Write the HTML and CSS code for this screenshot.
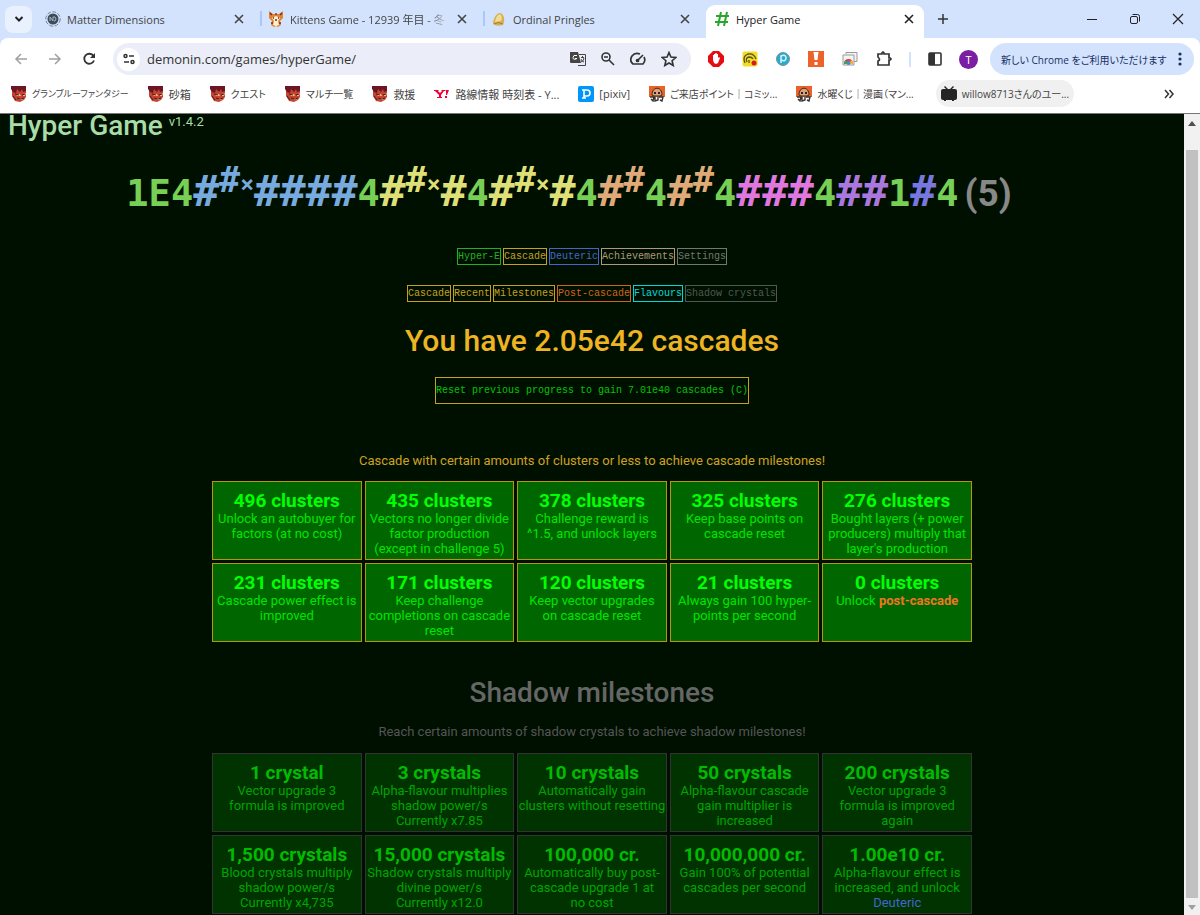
FILE: index.html
```html
<!DOCTYPE html>
<html lang="ja">
<head>
    <meta charset="UTF-8">
    <meta name="viewport" content="width=device-width, initial-scale=1.0">
    <title>Hyper Game</title>
    <link rel="stylesheet" href="styles.css">
</head>
<body>

    <!-- Shared icons -->
    <svg class="symbols" aria-hidden="true">
        <symbol id="close" viewBox="0 0 10 10"><path d="M1 1l8 8M9 1l-8 8" fill="none" stroke="currentColor" stroke-width="1.6"/></symbol>
        <symbol id="vyrn" viewBox="0 0 16 16">
            <path d="M1 1h13l1 3v7l-2 3-4 2-5-1-3-5z" fill="#c4442f"/>
            <path d="M0 0h15v5l-3 1-1-3-2 3-3-3-1 4-3-1-2-3z" fill="#6b1525"/>
            <path d="M5 8h4l1 2H6zM12 8l3-1-1 3h-2zM7 12l4 0 2 1-3 1z" fill="#f2b28b"/>
            <path d="M4 8l4 1M11 9l3-1M6 12l4 1 3-1M2 10l3 4" fill="none" stroke="#4a1518"/>
        </symbol>
        <symbol id="comic" viewBox="0 0 16 16">
            <path d="M0 0h16v11H0z" fill="#e8622a"/>
            <path d="M3 9c0-9 10-9 10 0l-2 1H5z" fill="#d9a27a" stroke="#40231a"/>
            <path d="M5 6h2v2H5zM9 6h2v2H9z" fill="#33211c"/>
            <path d="M1 11h4l-1 4-2-2M6 11v4l3-1v-3M10 11h4l-1 4-2-1" fill="none" stroke="#333" stroke-width="1.4"/>
        </symbol>
    </svg>

    <header class="browser">
        <div class="tab-strip">
            <button class="tab-search" aria-label="Search tabs">
                <svg width="10" height="8" viewBox="0 0 10 8"><path d="M1.500 2l3.500 3.500L8.500 2" fill="none" stroke="#222" stroke-width="2"/></svg>
            </button>
            <div class="tab">
                <svg width="16" height="16" viewBox="0 0 16 16"><circle cx="8" cy="8" r="7.200" fill="none" stroke="#788493" stroke-dasharray="4 1.500"/><circle cx="8" cy="8" r="5.500" fill="#3d4c5a"/><path d="M5 10V6l3 4V6h2q2 2 0 4H9" fill="none" stroke="#a8b6c3"/></svg>
                <span class="tab-title">Matter Dimensions</span>
                <button aria-label="Close tab"><svg width="10" height="10"><use href="#close"/></svg></button>
            </div>
            <div class="tab tab-divided">
                <svg width="16" height="16" viewBox="0 0 16 16"><path d="M1 0l4 3h6l4-3v7l-3 3 1 4-3 2-2-1-2 1-3-2 1-4-3-3z" fill="#df8437"/><path d="M4 7l4-2 4 2-2 3 1 4-3 1-3-1 1-4z" fill="#fff0d2"/><path d="M2 2l2 2M14 2l-2 2M5 7h1M10 7h1M7 9h2M3 12h2M11 12h2M8 2v2" stroke="#7a2b1c" stroke-width="1.300"/></svg>
                <span class="tab-title tab-fade">Kittens Game - 12939 年目 - 冬</span>
                <button aria-label="Close tab"><svg width="10" height="10"><use href="#close"/></svg></button>
            </div>
            <div class="tab tab-divided">
                <svg width="16" height="16" viewBox="0 0 16 16"><path d="M2 13C2 7 6 1 10 2q4 3 3 9l-1 3q-6 2-10-1z" fill="#d6b056"/><path d="M4 11Q5 4 9 3q3 3 1 7z" fill="#f2dc91"/><path d="M3 13q4-3 9 0" fill="none" stroke="#a67d2a"/></svg>
                <span class="tab-title">Ordinal Pringles</span>
                <button aria-label="Close tab"><svg width="10" height="10"><use href="#close"/></svg></button>
            </div>
            <div class="tab tab-active">
                <svg width="16" height="16" viewBox="0 0 16 16"><path d="M7 1L4 15M13 1l-3 14M2 5h13M1 11h13" fill="none" stroke="#2aa52c" stroke-width="2"/></svg>
                <span class="tab-title">Hyper Game</span>
                <button aria-label="Close tab"><svg width="10" height="10"><use href="#close"/></svg></button>
            </div>
            <button class="new-tab" aria-label="New tab"><svg width="12" height="12" viewBox="0 0 12 12"><path d="M6 1v10M1 6h10" stroke="#333" stroke-width="1.500"/></svg></button>
            <div class="window-buttons">
                <button aria-label="Minimize"><svg width="12" height="12" viewBox="0 0 12 12"><path d="M1 6.500h10" stroke="#222"/></svg></button>
                <button aria-label="Restore"><svg width="12" height="12" viewBox="0 0 12 12" fill="none" stroke="#222"><rect x="1.500" y="3.500" width="7" height="7" rx="1.500"/><path d="M3.500 1.500h5q2 0 2 2v5"/></svg></button>
                <button aria-label="Close window"><svg width="12" height="12" viewBox="0 0 12 12"><path d="M1 1l10 10M11 1L1 11" stroke="#222" stroke-width="1.200"/></svg></button>
            </div>
        </div>

        <div class="toolbar">
            <div class="nav-buttons">
                <button aria-label="Back"><svg width="14" height="14" viewBox="0 0 14 14" fill="none" stroke="#a0a0a0" stroke-width="1.500"><path d="M13 7H2M7 2L2 7l5 5"/></svg></button>
                <button aria-label="Forward"><svg width="14" height="14" viewBox="0 0 14 14" fill="none" stroke="#a0a0a0" stroke-width="1.500"><path d="M1 7h11M7 2l5 5-5 5"/></svg></button>
                <button aria-label="Reload"><svg width="14" height="14" viewBox="0 0 14 14"><path d="M11.500 4A5 5 0 1 0 12 8.500" fill="none" stroke="#333" stroke-width="1.800"/><path d="M13 1v5H8z" fill="#333"/></svg></button>
            </div>
            <div class="address-bar">
                <button class="site-info" aria-label="Site information"><svg width="12" height="12" viewBox="0 0 12 12" fill="none" stroke="#333" stroke-width="1.500"><circle cx="2.500" cy="3" r="1.500"/><path d="M6 3h5M1 9h5"/><circle cx="9.500" cy="9" r="1.500"/></svg></button>
                <input type="text" aria-label="Address" value="demonin.com/games/hyperGame/">
                <div class="address-icons">
                    <button aria-label="Translate"><svg width="16" height="16" viewBox="0 0 16 16"><path d="M0 1h8l3 11H1q-1 0-1-1z" fill="#444"/><path d="M9 3.500h6.500v11H8M11 6.500h3M12.500 5v1.500M11 11q3-1 3-4M11 8q1 3 3 3" fill="none" stroke="#444"/><path d="M7 4.500q-4-1-4 2t4 1H5" fill="none" stroke="#fff"/></svg></button>
                    <button aria-label="Zoom"><svg width="14" height="14" viewBox="0 0 14 14" fill="none" stroke="#333" stroke-width="1.600"><circle cx="5" cy="5" r="4"/><path d="M8 8l5 5M3 5h4"/></svg></button>
                    <button aria-label="Performance"><svg width="16" height="14" viewBox="0 0 16 14" fill="none" stroke="#333" stroke-width="1.700"><path d="M10 2Q5 0 2 4-1 9 3 12h10q3-3 1-7M7 9l6-6"/><circle cx="7.500" cy="8.500" r="1" fill="#333"/></svg></button>
                    <button aria-label="Bookmark this page"><svg width="16" height="16" viewBox="0 0 16 16"><path d="M8 1.500l1.900 4.600 4.900.4-3.700 3.200 1.100 4.800L8 12l-4.200 2.500 1.100-4.800L1.200 6.500l4.900-.4z" fill="none" stroke="#333" stroke-width="1.600"/></svg></button>
                </div>
            </div>
            <div class="extensions">
                <button aria-label="AdBlock"><svg width="16" height="16" viewBox="0 0 16 16"><path d="M5 0h6l5 5v6l-5 5H5l-5-5V5z" fill="#e40d13"/><path d="M5 8V4h1V3h1.300V2h1.400v1H10v4l1-1 1 1-2 5-2 1-2-1-1-3z" fill="#fff"/></svg></button>
                <button aria-label="Recorder"><svg width="16" height="16" viewBox="0 0 16 16"><rect x="0.500" y="0.500" width="15" height="15" rx="2" fill="#f1dd28"/><path d="M3 12Q0 5 6 3q6-1 8 5M5 11Q3 7 7 6q3 0 4 2M7 12V9" fill="none" stroke="#55511c" stroke-width="1.300"/><circle cx="12" cy="12" r="2.500" fill="#d91c18"/></svg></button>
                <button aria-label="Pixiv tools"><svg width="14" height="14" viewBox="0 0 14 14"><circle cx="7" cy="7" r="6.500" fill="#2aa9cd" stroke="#78939b"/><path d="M5 11V4q5-2 5 2t-5 2" fill="none" stroke="#d9f4fa" stroke-width="1.500"/></svg></button>
                <button aria-label="Alerts"><svg width="16" height="16" viewBox="0 0 16 16"><path d="M0 0h16v16H0z" fill="#ec622a"/><path d="M5.500 1h5L9.500 9h-3zM6.500 11h3v3h-3z" fill="#fff"/></svg></button>
                <button aria-label="Remote desktop"><svg width="16" height="16" viewBox="0 0 16 16"><path d="M4 3V1.500h11v9h-3M1 5V4h11v10H1z" fill="#f4f4f4" stroke="#999"/><path d="M2 13q0-5 4.500-5T11 13z" fill="#e53c32"/><path d="M2 13q0-3 2-4l2 4z" fill="#34a853"/><path d="M11 13q0-3-2-4l-2 4z" fill="#f8bd25"/><circle cx="6.500" cy="12" r="2" fill="#4286ed"/></svg></button>
                <button aria-label="Extensions"><svg width="16" height="16" viewBox="0 0 16 16"><path d="M2 3h4V2q1-2 2 0v1h5v4h1q2 1 0 2h-1v5H2v-4q3-1 0-4z" fill="none" stroke="#333" stroke-width="1.700"/></svg></button>
            </div>
            <span class="toolbar-divider"></span>
            <button class="side-panel" aria-label="Side panel"><svg width="14" height="14" viewBox="0 0 14 14"><rect x="1" y="1" width="12" height="12" rx="1" fill="none" stroke="#333" stroke-width="1.600"/><path d="M1 1h6v12H1z" fill="#333"/></svg></button>
            <button class="avatar">T</button>
            <button class="update-button">新しい Chrome をご利用いただけます
                <svg width="4" height="14" viewBox="0 0 4 14" fill="#173066"><circle cx="2" cy="2" r="1.600"/><circle cx="2" cy="7" r="1.600"/><circle cx="2" cy="12" r="1.600"/></svg>
            </button>
        </div>

        <nav class="bookmarks">
            <a href="#" class="kana"><svg width="16" height="16"><use href="#vyrn"/></svg>グランブルーファンタジー</a>
            <a href="#"><svg width="16" height="16"><use href="#vyrn"/></svg>砂箱</a>
            <a href="#" class="mixed"><svg width="16" height="16"><use href="#vyrn"/></svg>クエスト</a>
            <a href="#" class="mixed"><svg width="16" height="16"><use href="#vyrn"/></svg>マルチ一覧</a>
            <a href="#"><svg width="16" height="16"><use href="#vyrn"/></svg>救援</a>
            <a href="#"><svg width="16" height="16" viewBox="0 0 16 16"><path d="M0 4h5l-1 1 2 2 2-2-1-1h5l-1 1H10L7 9v2h1v1H3v-1h2V9L1 5H0zM12 4h3l-2 5h-1zM11 10h2v2h-2z" fill="#f00033"/></svg>路線情報 時刻表 - Y...</a>
            <a href="#"><svg width="16" height="16" viewBox="0 0 16 16"><rect width="16" height="16" rx="2" fill="#0096fa"/><path d="M4 4h5q3 0 3 3t-3 3H6M6 4v8M4 12h4" fill="none" stroke="#fff" stroke-width="1.600"/></svg>[pixiv]</a>
            <a href="#" class="mixed"><svg width="16" height="16"><use href="#comic"/></svg>ご来店ポイント｜コミッ...</a>
            <a href="#" class="mixed"><svg width="16" height="16"><use href="#comic"/></svg>水曜くじ｜漫画（マン...</a>
            <a href="#" class="mixed bookmark-hover"><svg width="16" height="16" viewBox="0 0 16 16"><path d="M2 3h3L3 1l1-1 3 3h2l3-3 1 1-2 2h3q2 0 2 2v7q0 2-2 2h-1v1h-2v-1H5v1H3v-1H2q-2 0-2-2V5q0-2 2-2z" fill="#252525"/></svg>willow8713さんのユー...</a>
            <button class="more" aria-label="More bookmarks"><svg width="10" height="10" viewBox="0 0 10 10"><path d="M1 1l3.500 4L1 9M5.500 1L9 5 5.500 9" fill="none" stroke="#333" stroke-width="1.500"/></svg></button>
        </nav>
    </header>

    <div class="viewport">
        <main class="game">
            <h1 class="game-title">Hyper Game <small>v1.4.2</small></h1>

            <div class="hyper-number"><span class="num">1E4</span><span class="blue">#<sup>#<b>×</b></sup>####</span><span class="num">4</span><span class="yellow">#<sup>#<b>×</b></sup>#</span><span class="num">4</span><span class="yellow">#<sup>#<b>×</b></sup>#</span><span class="num">4</span><span class="orange">#<sup>#</sup></span><span class="num">4</span><span class="orange">#<sup>#</sup></span><span class="num">4</span><span class="pink">###</span><span class="num">4</span><span class="purple">##</span><span class="num">1</span><span class="indigo">#</span><span class="num">4</span><span class="count">(5)</span></div>

            <div class="tabs">
                <button class="tab-hyper">Hyper-E</button>
                <button class="tab-gold">Cascade</button>
                <button class="tab-deuteric">Deuteric</button>
                <button class="tab-achievements">Achievements</button>
                <button class="tab-settings">Settings</button>
            </div>
            <div class="tabs">
                <button class="tab-gold">Cascade</button>
                <button class="tab-gold">Recent</button>
                <button class="tab-gold">Milestones</button>
                <button class="tab-post">Post-cascade</button>
                <button class="tab-flavours">Flavours</button>
                <button class="tab-shadow">Shadow crystals</button>
            </div>

            <h2 class="cascade-amount">You have 2.05e42 cascades</h2>
            <button class="reset-button">Reset previous progress to gain 7.01e40 cascades (C)</button>

            <section class="milestones">
                <p>Cascade with certain amounts of clusters or less to achieve cascade milestones!</p>
                <div class="milestone-grid">
                    <div class="milestone"><h3>496 clusters</h3>Unlock an autobuyer for<br>factors (at no cost)</div>
                    <div class="milestone"><h3>435 clusters</h3>Vectors no longer divide<br>factor production<br>(except in challenge 5)</div>
                    <div class="milestone"><h3>378 clusters</h3>Challenge reward is<br>^1.5, and unlock layers</div>
                    <div class="milestone"><h3>325 clusters</h3>Keep base points on<br>cascade reset</div>
                    <div class="milestone"><h3>276 clusters</h3>Bought layers (+ power<br>producers) multiply that<br>layer's production</div>
                    <div class="milestone"><h3>231 clusters</h3>Cascade power effect is<br>improved</div>
                    <div class="milestone"><h3>171 clusters</h3>Keep challenge<br>completions on cascade<br>reset</div>
                    <div class="milestone"><h3>120 clusters</h3>Keep vector upgrades<br>on cascade reset</div>
                    <div class="milestone"><h3>21 clusters</h3>Always gain 100 hyper-<br>points per second</div>
                    <div class="milestone"><h3>0 clusters</h3>Unlock <b class="post-cascade">post-cascade</b></div>
                </div>
            </section>

            <section class="milestones shadow">
                <h2>Shadow milestones</h2>
                <p>Reach certain amounts of shadow crystals to achieve shadow milestones!</p>
                <div class="milestone-grid">
                    <div class="milestone"><h3>1 crystal</h3>Vector upgrade 3<br>formula is improved</div>
                    <div class="milestone"><h3>3 crystals</h3>Alpha-flavour multiplies<br>shadow power/s<br>Currently x7.85</div>
                    <div class="milestone"><h3>10 crystals</h3>Automatically gain<br>clusters without resetting</div>
                    <div class="milestone"><h3>50 crystals</h3>Alpha-flavour cascade<br>gain multiplier is<br>increased</div>
                    <div class="milestone"><h3>200 crystals</h3>Vector upgrade 3<br>formula is improved<br>again</div>
                    <div class="milestone"><h3>1,500 crystals</h3>Blood crystals multiply<br>shadow power/s<br>Currently x4,735</div>
                    <div class="milestone"><h3>15,000 crystals</h3>Shadow crystals multiply<br>divine power/s<br>Currently x12.0</div>
                    <div class="milestone"><h3>100,000 cr.</h3>Automatically buy post-<br>cascade upgrade 1 at<br>no cost</div>
                    <div class="milestone"><h3>10,000,000 cr.</h3>Gain 100% of potential<br>cascades per second</div>
                    <div class="milestone"><h3>1.00e10 cr.</h3>Alpha-flavour effect is<br>increased, and unlock<br><span class="deuteric">Deuteric</span></div>
                </div>
            </section>
        </main>
        <div class="scrollbar">
            <svg width="8" height="5" viewBox="0 0 8 5"><path d="M0 5l4-5 4 5z" fill="#505050"/></svg>
            <div class="scroll-thumb"></div>
            <svg width="8" height="5" viewBox="0 0 8 5"><path d="M0 0l4 5 4-5z" fill="#a0a0a0"/></svg>
        </div>
    </div>

</body>
</html>
```
FILE: styles.css
```css
* {
    box-sizing: border-box;
}

body {
    margin: 0;
    height: 100vh;
    display: flex;
    flex-direction: column;
    overflow: hidden;
    background-color: #001000;
    font-family: Roboto, "Liberation Sans", sans-serif;
}

button {
    padding: 0;
    border: 0;
    background: none;
    font: inherit;
    color: inherit;
    cursor: pointer;
}

svg {
    display: block;
    flex: none;
}

.symbols {
    display: none;
}

/* Browser bar */
.browser {
    flex: none;
    background-color: #d3e3fd;
    color: #444;
    font-family: "Open Sans", "Noto Sans CJK JP", sans-serif;
    font-size: 11px;
    border-bottom: 1px solid #777;
}

.tab-strip {
    height: 38px;
    display: flex;
    align-items: center;
    padding-left: 5px;
}

.tab-search {
    width: 27px;
    height: 27px;
    margin-right: 5px;
    border-radius: 8px;
    background-color: #eaf1fe;
    display: grid;
    place-items: center;
}

.tab {
    flex: 0 1 223px;
    height: 33px;
    margin-top: 5px;
    padding: 0 16px 5px 8px;
    display: flex;
    align-items: center;
    gap: 6px;
    min-width: 0;
}

.tab-divided {
    background: linear-gradient(#a8c7fa, #a8c7fa) left 6px / 2px 15px no-repeat;
}

.tab-title {
    flex: 1;
    overflow: hidden;
    white-space: nowrap;
}

.tab-fade {
    flex: 0 1 160px;
    margin-right: auto;
    -webkit-mask-image: linear-gradient(to right, #000 85%, transparent);
    mask-image: linear-gradient(to right, #000 85%, transparent);
}

.tab-active {
    flex-basis: 218px;
    padding-right: 10px;
    border-radius: 9px 9px 0 0;
    background-color: #fff;
    color: #222;
}

.new-tab {
    margin-left: 13px;
}

.window-buttons {
    margin-left: auto;
    display: flex;
    gap: 31px;
    padding-right: 16px;
}

.toolbar {
    height: 42px;
    display: flex;
    align-items: center;
    padding: 0 6px 0 14px;
    background-color: #fff;
    border-radius: 8px 8px 0 0;
}

.nav-buttons {
    display: flex;
    gap: 20px;
    margin-right: 17px;
}

.address-bar {
    flex: 1;
    height: 32px;
    display: flex;
    align-items: center;
    padding: 0 14px 0 4px;
    border-radius: 16px;
    background-color: #ebeef8;
    min-width: 0;
}

.site-info {
    width: 23px;
    height: 23px;
    border-radius: 50%;
    background-color: #fff;
    display: grid;
    place-items: center;
}

.address-bar input {
    flex: 1;
    min-width: 0;
    padding: 0 7px;
    border: 0;
    outline: 0;
    background: none;
    font-family: "Open Sans", sans-serif;
    font-size: 13px;
    color: #333;
}

.address-icons {
    display: flex;
    align-items: center;
    gap: 15px;
}

.extensions {
    display: flex;
    align-items: center;
    gap: 18px;
    margin-left: 17px;
}

.toolbar-divider {
    width: 2px;
    height: 15px;
    margin: 0 17px;
    background-color: #d3e3fd;
}

.avatar {
    width: 19px;
    height: 19px;
    margin: 0 12px 0 17px;
    border-radius: 50%;
    background-color: #7b1fa2;
    color: #fff;
}

.update-button {
    width: 204px;
    height: 32px;
    padding: 0 12px 0 11px;
    display: flex;
    align-items: center;
    justify-content: space-between;
    border-radius: 16px;
    background-color: #d3e3fd;
    color: #173066;
    font-size: 10px;
    font-feature-settings: "palt";
    white-space: nowrap;
}

.bookmarks {
    height: 33px;
    display: flex;
    align-items: flex-start;
    padding: 0 26px 0 6px;
    gap: 9px;
    background-color: #fff;
    font-feature-settings: "palt";
}

.bookmarks a {
    height: 27px;
    display: flex;
    align-items: center;
    gap: 5px;
    padding: 0 5px;
    border-radius: 14px;
    color: #444;
    text-decoration: none;
    white-space: nowrap;
}

.bookmarks .kana {
    font-size: 9px;
}

.bookmarks .mixed {
    font-size: 10px;
}

.bookmarks .bookmark-hover {
    margin-left: 8px;
    background-color: #f0f0f0;
}

.more {
    height: 27px;
    margin-left: auto;
}

/* Game */
.viewport {
    flex: 1;
    min-height: 0;
    display: flex;
}

.game {
    flex: 1;
    overflow: hidden;
    text-align: center;
    font-size: 13px;
    line-height: 15px;
    color: #0c0;
}

.game h2,
.game h3,
.game p {
    margin: 0;
}

.game-title {
    display: flex;
    gap: 6px;
    margin: 0;
    padding-left: 8px;
    text-align: left;
    font-size: 28px;
    font-weight: 500;
    line-height: 24px;
    color: #a8dca8;
}

.game-title small {
    font-size: 13px;
    line-height: 15px;
    font-weight: normal;
}

.hyper-number {
    margin-top: 24px;
    height: 58px;
    font-family: "DejaVu Sans Mono", monospace;
    font-size: 43px;
    line-height: 58px;
    font-weight: bold;
    white-space: nowrap;
    padding-right: 46px;
}

.hyper-number sup {
    font-size: 35px;
    line-height: 1;
    vertical-align: 14px;
}

.hyper-number b {
    font-size: 23px;
    vertical-align: 0;
}

.num { color: #77cf55; font-size: 37px; }
.blue { color: #77aade; }
.yellow { color: #dfdf77; }
.orange { color: #dfaa77; }
.pink { color: #df77df; }
.purple { color: #aa77df; }
.indigo { color: #7777df; }

.count {
    margin-left: 6px;
    font-family: Roboto, sans-serif;
    font-size: 37px;
    color: #888;
}

.tabs {
    display: flex;
    justify-content: center;
    gap: 2px;
    margin-top: 20px;
}

.hyper-number + .tabs {
    margin-top: 28px;
}

.tabs button {
    height: 17px;
    border: 1px solid;
    font-family: "Liberation Mono", monospace;
    font-size: 10px;
    line-height: 15px;
}

.tab-hyper { color: #22b022; }
.tabs .tab-gold { color: #c8a01c; }
.tab-deuteric { color: #4466cc; }
.tab-achievements { color: #b09878; }
.tab-settings { color: #707870; }
.tab-post { color: #d06418; }
.tab-flavours { color: #00d8d8; }
.tab-shadow { color: #505850; }

.cascade-amount {
    padding-top: 20px;
    font-size: 30px;
    font-weight: 500;
    line-height: 38px;
    color: #eeb422;
}

.reset-button {
    margin-top: 17px;
    height: 27px;
    border: 1px solid #c8a01c;
    font-family: "Liberation Mono", monospace;
    font-size: 10px;
    color: #00c400;
}

.milestones p {
    margin-top: 49px;
    color: #d0a020;
}

.milestone-grid {
    width: 760px;
    max-width: 100%;
    margin: 13px auto 0;
    display: grid;
    grid-template-columns: repeat(5, minmax(0, 1fr));
    gap: 3px;
}

.milestone {
    height: 79px;
    padding-top: 8px;
    border: 1px solid #b8960c;
    background-color: #006600;
    color: #00e400;
    white-space: nowrap;
}

.milestone h3 {
    font-size: 19px;
    line-height: 21px;
    color: #00ff00;
}

.post-cascade {
    color: #ee7722;
}

.shadow h2 {
    margin-top: 32px;
    font-size: 28px;
    font-weight: 500;
    line-height: 38px;
    color: #666;
}

.shadow p {
    margin-top: 12px;
    color: #555;
}

.shadow .milestone-grid {
    margin-top: 14px;
}

.shadow .milestone {
    border-color: #333;
    background-color: #003300;
    color: #00a400;
}

.shadow .milestone h3 {
    color: #00bb00;
}

.shadow .deuteric {
    color: #4466cc;
}

/* Page scrollbar */
.scrollbar {
    width: 16px;
    display: flex;
    flex-direction: column;
    align-items: center;
    padding: 7px 0 5px;
    gap: 7px;
    background-color: #f1f1f1;
}

.scroll-thumb {
    flex: 1;
    width: 12px;
    margin-top: 17px;
    background-color: #c1c1c1;
}
```
